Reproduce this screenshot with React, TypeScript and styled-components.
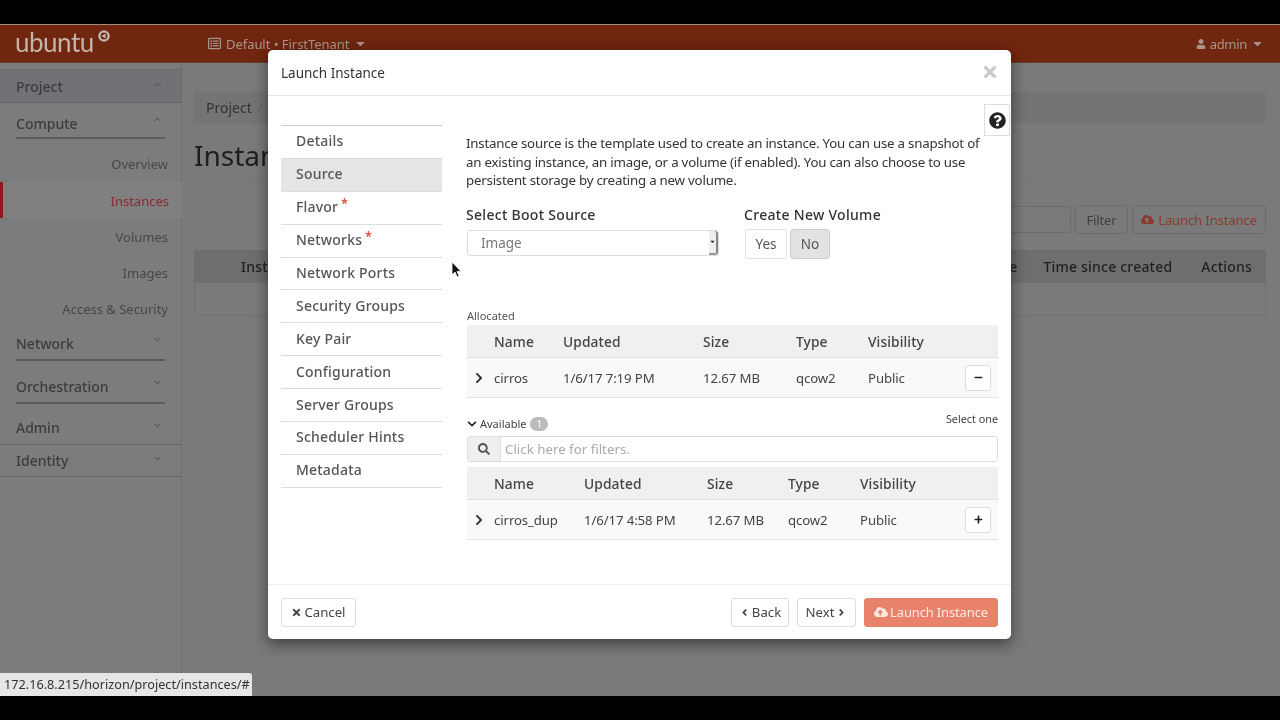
import React from "react";
import styled, { createGlobalStyle } from "styled-components";
import {
  FaCaretDown, FaChevronDown, FaChevronRight, FaChevronUp, FaCloudUploadAlt, FaMinus, FaPlus,
  FaQuestionCircle, FaRegListAlt, FaSearch, FaTimes, FaUser, FaAngleLeft, FaAngleRight,
} from "react-icons/fa";

const FONT = `"Noto Sans", "Open Sans", sans-serif`;

const Global = createGlobalStyle`
  html, body { margin: 0; padding: 0; background: #000; }
  body { font-family: ${FONT}; font-size: 14px; color: #333; overflow: hidden; }
  * { box-sizing: border-box; }
`;

const Screen = styled.div`
  width: 1280px; height: 720px; background: #000;
  padding: 24px 0; filter: blur(0.35px);
`;
const Page = styled.div`
  position: relative; width: 1280px; height: 672px; background: #7a7a7a; overflow: hidden;
  display: flex; flex-direction: column; border-top: 1px solid #a08a82;
`;
const Navbar = styled.header`
  height: 38px; background: #70260f; flex: none; display: flex; align-items: center;
  padding: 0 16px 0 15px; border-bottom: 1px solid #6a3a2a; color: #b0a09a;
`;
const Logo = styled.div`
  width: 193px; display: flex; align-items: flex-start; color: #c4b4ac;
  font: 400 26px/36px Lato, sans-serif; letter-spacing: -0.5px; margin-top: -3px;
  svg { margin: 6px 0 0 4px; }
`;
const TenantMenu = styled.div`
  display: flex; align-items: center; gap: 5px; font-size: 13px; letter-spacing: -0.05px; color: #a8948c;
`;
const UserMenu = styled(TenantMenu)`margin-left: auto; gap: 4px; letter-spacing: -0.3px;`;
const Body = styled.div`display: flex; flex: 1; min-height: 0;`;
const Sidebar = styled.aside`
  width: 182px; flex: none; background: #7c7c7c; border-right: 1px solid #6e6e6e; padding-top: 6px;
`;
const Panel = styled.div<{ $active?: boolean; $h: number; $gap?: number; $pad?: number }>`
  height: ${(p) => p.$h}px; display: flex; align-items: center; justify-content: space-between;
  padding: 0 16px ${(p) => p.$pad ?? 2}px; margin-top: ${(p) => p.$gap ?? 0}px;
  font-weight: 500; font-size: 14px; color: #3c3c3c;
  background: ${(p) => (p.$active ? "#717276" : "transparent")};
  border-bottom: 1px solid #666;
  ${(p) => p.$active && "border-top: 1px solid #6a6a6a;"}
  svg { font-size: 7px; color: #5a5a5a; margin: -4px 4px 0 0; }
`;
const Group = styled.div<{ $h: number; $top: number }>`
  height: ${(p) => p.$h}px; margin: 0 16px; padding-top: ${(p) => p.$top}px;
  display: flex; justify-content: space-between; align-items: center;
  border-bottom: 2px solid #5c5c5c; font-weight: 500; font-size: 14px; color: #3c3c3c;
  svg { font-size: 7px; color: #5a5a5a; margin: -8px 4px 0 0; }
`;
const SubItem = styled.div<{ $h: number; $top?: number; $current?: boolean }>`
  position: relative; height: ${(p) => p.$h}px; display: flex; align-items: center; justify-content: flex-end;
  padding: ${(p) => p.$top ?? 1}px 13px 0 0; font-size: 13px; color: ${(p) => (p.$current ? "#8a2a30" : "#474747")};
  ${(p) => p.$current && `
    background: #808080; margin-right: -1px;
    &::before { content: ""; position: absolute; left: 0; top: 0; bottom: 0; width: 3px; background: #8f1c1c; }
  `}
`;
const Content = styled.main`flex: 1; min-width: 0; padding: 29px 14px 0 12px;`;
const Breadcrumb = styled.div`
  height: 31px; background: #747474; padding: 0 12px; display: flex; align-items: center; color: #333; font-size: 14px; gap: 6px;
  span { color: #666; }
`;
const Heading = styled.h1`
  margin: 15px 0 0; font: 400 28px/34px ${FONT}; color: #1e1e1e; height: 45px; border-bottom: 1px solid #757575;
`;
const Actions = styled.div`
  height: 29px; margin-top: 22px; display: flex; justify-content: flex-end; gap: 4px; align-items: center;
`;
const BgInput = styled.div`height: 27px; width: 300px; border: 1px solid #6c6c6c; border-radius: 3px;`;
const BgBtn = styled.div<{ $red?: boolean; $w: number }>`
  height: 29px; width: ${(p) => p.$w}px; border: 1px solid #6c6c6c; border-radius: 3px;
  display: flex; align-items: center; justify-content: center; gap: 4px;
  font-size: 13px; letter-spacing: -0.1px; color: ${(p) => (p.$red ? "#8c3a2c" : "#3e3e3e")};
`;
const BgHead = styled.div`
  margin-top: 16px; height: 33px; background: #6e6e6e; display: flex; justify-content: flex-end; align-items: center;
  gap: 29px; padding: 0 14px 0 0; font-weight: 500; font-size: 14px; letter-spacing: 0.2px; color: #1f1f1f; white-space: nowrap;
`;
const BgHeadStart = styled.span`margin-right: auto; padding-left: 47px;`;
const BgHeadTail = styled.span`margin-right: -3px;`;
const BgRow = styled.div`height: 33px; border: 1px solid #707070; border-top: 0;`;

const Modal = styled.section`
  position: absolute; left: 268px; top: 25px; width: 743px; height: 589px; background: #fff; border-radius: 5px;
  box-shadow: 0 5px 15px rgba(0, 0, 0, 0.5); display: flex; flex-direction: column;
`;
const ModalHeader = styled.div`
  height: 46px; flex: none; border-bottom: 1px solid #e5e5e5; display: flex; align-items: center; justify-content: space-between;
  padding: 0 13px; font-size: 13.5px; color: #333;
  svg { color: #c9c9c9; font-size: 18px; margin: -2px -1px 0 0; }
`;
const HelpTab = styled.div`
  position: absolute; right: 1px; top: 54px; width: 26px; height: 32px; border: 1px solid #ddd;
  background: #fff; display: flex; align-items: center; justify-content: center; font-size: 17px; color: #222;
`;
const ModalBody = styled.div`flex: 1; display: flex; padding: 29px 13px 0 13px; min-height: 0;`;
const WizardNav = styled.nav`width: 161px; flex: none; border-top: 1px solid #ccc; align-self: flex-start;`;
const NavRow = styled.div<{ $on?: boolean }>`
  height: 32.9px; display: flex; align-items: center; padding: 0 0 2px 15px; border-bottom: 1px solid #ddd;
  font-weight: 500; font-size: 14px; letter-spacing: 0.2px; color: #555;
  background: ${(p) => (p.$on ? "#e4e5e5" : "transparent")};
`;
const Required = styled.span`color: #e0503a; font-size: 12px; font-weight: 700; line-height: 1; margin: -6px 0 0 3px;`;
const Step = styled.div`flex: 1; margin: 9px 0 0 24px; min-width: 0; position: relative;`;
const Intro = styled.p`
  margin: 0; font-size: 13.3px; line-height: 18.6px; color: #333; letter-spacing: -0.22px; width: 532px; white-space: nowrap;
`;
const FormRow = styled.div`display: flex; margin-top: 15px; height: 104px;`;
const Field = styled.div<{ $w: number }>`width: ${(p) => p.$w}px; flex: none;`;
const FieldLabel = styled.div`
  font-weight: 500; font-size: 14px; line-height: 19px; letter-spacing: 0.3px; color: #333; margin-bottom: 6px;
`;
const SelectBox = styled.div`
  position: relative; width: 252px; height: 26px; margin-left: 1px; border: 1px solid #ddd; border-radius: 3px; display: flex; align-items: center;
  padding-left: 13px; font-size: 13.5px; color: #777;
`;
const SelectArrow = styled.div`
  position: absolute; right: 0; top: 0; bottom: 0; width: 9px; background: #eee; border-right: 2px solid #888; border-bottom: 2px solid #999;
  border-radius: 0 3px 3px 0; display: flex; align-items: center; justify-content: center; font-size: 7px; color: #222;
`;
const Toggle = styled.div`display: flex; gap: 3px; margin: -1px 0 0 1px;`;
const ToggleBtn = styled.div<{ $on?: boolean }>`
  height: 30px; width: ${(p) => (p.$on ? 40 : 42)}px; border: 1px solid ${(p) => (p.$on ? "#ccc" : "#e2e2e2")}; border-radius: 3px;
  display: flex; align-items: center; justify-content: center; font-size: 13.5px; color: #555;
  background: ${(p) => (p.$on ? "#e2e2e2" : "#fff")};
`;
const SmallLabel = styled.div`font-size: 11px; line-height: 14px; color: #555; margin: 0 0 2px 1px;`;
const Table = styled.div`width: 531px; margin-left: 1px; border-bottom: 1px solid #e4e4e4;`;
const Cells = styled.div<{ $cols: string; $head?: boolean }>`
  display: grid; grid-template-columns: ${(p) => p.$cols}; align-items: center; position: relative;
  height: ${(p) => (p.$head ? 33 : 39)}px;
  padding-top: 2px;
  background: ${(p) => (p.$head ? "#f0f0f0" : "#f9f9f9")};
  ${(p) => p.$head && "border-bottom: 1px solid #e0e0e0;"}
  font-size: ${(p) => (p.$head ? 13.8 : 13.2)}px;
  font-weight: ${(p) => (p.$head ? 500 : 400)};
  letter-spacing: ${(p) => (p.$head ? "0.1px" : "-0.1px")};
  color: #444;
`;
const Expander = styled.span`
  display: flex; justify-content: center; font-size: 12px; color: #333; padding-right: 3px;
`;
const RowBtn = styled.div`
  position: absolute; right: 7px; top: 7px; width: 26px; height: 26px; background: #fff; border: 1px solid #ddd; border-radius: 3px;
  display: flex; align-items: center; justify-content: center; font-size: 9px; color: #222;
`;
const AvailableHead = styled.div`
  display: flex; justify-content: space-between; margin-top: 12px; height: 26px;
`;
const AvailableTitle = styled.div`
  display: flex; align-items: center; gap: 3px; font-size: 11px; color: #444; height: 22px; margin: 3px 0 0 1px;
  svg { font-size: 10px; color: #222; }
`;
const Badge = styled.span`
  width: 18px; height: 14px; border-radius: 8px; background: #bbb; color: #fff; font-size: 10px; display: flex;
  align-items: center; justify-content: center; margin-left: 1px;
`;
const SelectOne = styled.div`font-size: 10.8px; line-height: 14px; color: #444; padding-top: 2px;`;
const FilterBar = styled.div`
  width: 531px; height: 26px; margin-left: 1px; border: 1px solid #ddd; border-radius: 3px; display: flex; align-items: stretch; margin-bottom: 5px;
`;
const FilterAddon = styled.div`
  width: 33px; background: #efefef; border-right: 1px solid #ddd; display: flex; align-items: center; justify-content: center; font-size: 12px; color: #555;
`;
const FilterText = styled.div`padding-left: 4px; display: flex; align-items: center; font-size: 13.3px; color: #aaa;`;
const ModalFooter = styled.div`
  height: 55px; flex: none; border-top: 1px solid #eee; display: flex; align-items: center; justify-content: space-between; padding: 0 13px;
`;
const FooterRight = styled.div`display: flex; gap: 8px;`;
const Btn = styled.div<{ $w: number; $primary?: boolean }>`
  width: ${(p) => p.$w}px; height: 29px; border-radius: 3px; display: flex; align-items: center; justify-content: center; gap: 2px;
  font-size: ${(p) => (p.$primary ? 13 : 13.2)}px;
  letter-spacing: ${(p) => (p.$primary ? "-0.15px" : "0")};
  border: 1px solid ${(p) => (p.$primary ? "#e8826a" : "#ddd")};
  background: ${(p) => (p.$primary ? "#e8826a" : "#fff")};
  color: ${(p) => (p.$primary ? "#fbe9e4" : "#444")};
`;
const StatusTip = styled.div`
  position: absolute; left: 0; bottom: 0; height: 23px; width: 252px; background: #e6e6e6; border-radius: 0 3px 0 0;
  display: flex; align-items: center; padding: 0 0 2px 4px; font-size: 12.7px; color: #333; white-space: nowrap;
`;
const Cursor = styled.svg`position: absolute; left: 451px; top: 236px;`;

const COLS_A = "27px 69px 140px 93px 72px 1fr";
const COLS_B = "27px 90px 123px 81px 72px 1fr";

const NAV = ["Details", "Source", "Flavor", "Networks", "Network Ports", "Security Groups", "Key Pair", "Configuration", "Server Groups", "Scheduler Hints", "Metadata"];

const ImageTable = ({ cols, row, icon }: { cols: string; row: string[]; icon: React.ReactNode }) => (
  <Table>
    <Cells $cols={cols} $head>
      <span />
      <span>Name</span><span>Updated</span><span>Size</span><span>Type</span><span>Visibility</span>
    </Cells>
    <Cells $cols={cols}>
      <Expander><FaChevronRight /></Expander>
      {row.map((c) => <span key={c}>{c}</span>)}
      <RowBtn>{icon}</RowBtn>
    </Cells>
  </Table>
);

export default function App() {
  return (
    <Screen>
      <Global />
      <Page>
        <Navbar>
          <Logo>
            ubuntu
            <svg width="12" height="12" viewBox="0 0 12 12">
              <circle cx="6" cy="6" r="4.6" fill="none" stroke="#c4b4ac" strokeWidth="2.4" />
              <path d="M3.4 6 7.6 3.6v4.8z" fill="#c4b4ac" />
            </svg>
          </Logo>
          <TenantMenu><FaRegListAlt /> Default • FirstTenant <FaCaretDown /></TenantMenu>
          <UserMenu><FaUser size={10} /> admin <FaCaretDown /></UserMenu>
        </Navbar>
        <Body>
          <Sidebar>
            <Panel $active $h={34} $pad={0}>Project <FaChevronUp /></Panel>
            <Group $h={36} $top={6}>Compute <FaChevronUp /></Group>
            <SubItem $h={43} $top={7}>Overview</SubItem>
            <SubItem $h={36} $current>Instances</SubItem>
            <SubItem $h={36}>Volumes</SubItem>
            <SubItem $h={36}>Images</SubItem>
            <SubItem $h={36}>Access &amp; Security</SubItem>
            <Group $h={35} $top={2}>Network <FaChevronDown /></Group>
            <Group $h={43} $top={10}>Orchestration <FaChevronDown /></Group>
            <Panel $h={33} $gap={8}>Admin <FaChevronDown /></Panel>
            <Panel $h={32} $pad={0}>Identity <FaChevronDown /></Panel>
          </Sidebar>
          <Content>
            <Breadcrumb>Project <span>/</span></Breadcrumb>
            <Heading>Instances</Heading>
            <Actions>
              <BgInput />
              <BgBtn $w={53}>Filter</BgBtn>
              <BgBtn $w={134} $red><FaCloudUploadAlt /> Launch Instance</BgBtn>
            </Actions>
            <BgHead>
              <BgHeadStart>Instance Name</BgHeadStart>
              <BgHeadTail>Power State</BgHeadTail>
              <span>Time since created</span>
              <span>Actions</span>
            </BgHead>
            <BgRow />
          </Content>
        </Body>
        <StatusTip>172.16.8.215/horizon/project/instances/#</StatusTip>
        <Modal>
          <ModalHeader>Launch Instance <FaTimes /></ModalHeader>
          <HelpTab><FaQuestionCircle /></HelpTab>
          <ModalBody>
            <WizardNav>
              {NAV.map((n) => (
                <NavRow key={n} $on={n === "Source"}>
                  {n}
                  {(n === "Flavor" || n === "Networks") && <Required>*</Required>}
                </NavRow>
              ))}
            </WizardNav>
            <Step>
              <Intro>
                Instance source is the template used to create an instance. You can use a snapshot of<br />
                an existing instance, an image, or a volume (if enabled). You can also choose to use<br />
                persistent storage by creating a new volume.
              </Intro>
              <FormRow>
                <Field $w={278}>
                  <FieldLabel>Select Boot Source</FieldLabel>
                  <SelectBox>Image<SelectArrow><FaCaretDown /></SelectArrow></SelectBox>
                </Field>
                <Field $w={200}>
                  <FieldLabel>Create New Volume</FieldLabel>
                  <Toggle><ToggleBtn>Yes</ToggleBtn><ToggleBtn $on>No</ToggleBtn></Toggle>
                </Field>
              </FormRow>
              <SmallLabel>Allocated</SmallLabel>
              <ImageTable cols={COLS_A} row={["cirros", "1/6/17 7:19 PM", "12.67 MB", "qcow2", "Public"]} icon={<FaMinus />} />
              <AvailableHead>
                <AvailableTitle><FaChevronDown /> Available <Badge>1</Badge></AvailableTitle>
                <SelectOne>Select one</SelectOne>
              </AvailableHead>
              <FilterBar>
                <FilterAddon><FaSearch /></FilterAddon>
                <FilterText>Click here for filters.</FilterText>
              </FilterBar>
              <ImageTable cols={COLS_B} row={["cirros_dup", "1/6/17 4:58 PM", "12.67 MB", "qcow2", "Public"]} icon={<FaPlus />} />
            </Step>
          </ModalBody>
          <ModalFooter>
            <Btn $w={75}><FaTimes size={11} /> Cancel</Btn>
            <FooterRight>
              <Btn $w={58}><FaAngleLeft size={11} /> Back</Btn>
              <Btn $w={59}>Next <FaAngleRight size={11} /></Btn>
              <Btn $w={134} $primary><FaCloudUploadAlt size={14} /> Launch Instance</Btn>
            </FooterRight>
          </ModalFooter>
        </Modal>
        <Cursor width="11" height="17" viewBox="0 0 11 17">
          <path d="M1 1v13l3-3 2.2 5 2-1-2.2-4.6H10z" fill="#111" stroke="#fff" strokeWidth="0.8" />
        </Cursor>
      </Page>
    </Screen>
  );
}
